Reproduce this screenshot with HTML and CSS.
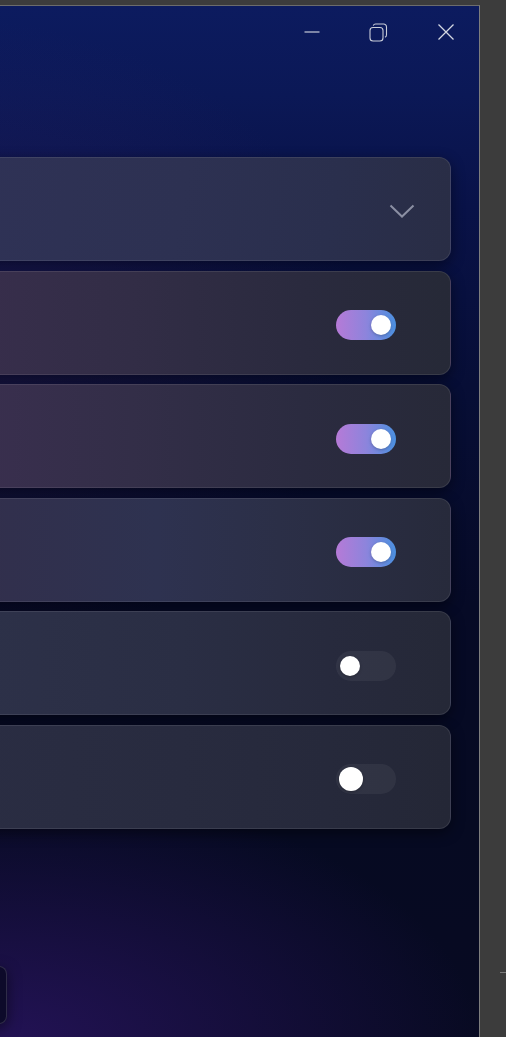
FILE: index.html
```html
<!DOCTYPE html>
<html lang="en">
<head>
<meta charset="utf-8">
<title>Settings</title>
<link rel="stylesheet" href="styles.css">
</head>
<body>
<div class="screen">
  <div class="window">
    <div class="titlebar">
      <button class="ctl" aria-label="Minimize">
        <svg width="16" height="2" viewBox="0 0 16 2"><line x1="0.5" y1="1" x2="15.5" y2="1" stroke="#c9cdd9" stroke-width="1.2"/></svg>
      </button>
      <button class="ctl" aria-label="Restore">
        <svg width="19" height="19" viewBox="0 0 19 19" fill="none" stroke="#c9cdd9" stroke-width="1.1">
          <rect x="1" y="4.5" width="13" height="13.5" rx="3"/>
          <path d="M4.2 2.6 A2.6 2.6 0 0 1 6.6 1 H14.6 A2.9 2.9 0 0 1 17.5 3.9 V11.6 A2.6 2.6 0 0 1 16 14.2"/>
        </svg>
      </button>
      <button class="ctl" aria-label="Close">
        <svg width="16" height="16" viewBox="0 0 16 16"><path d="M0.5 0.5 L15.5 15.5 M15.5 0.5 L0.5 15.5" stroke="#d4d8e3" stroke-width="1.3"/></svg>
      </button>
    </div>

    <div class="cards">
      <div class="card c1 card-select">
        <svg class="chevron" width="26" height="15" viewBox="0 0 26 15"><polyline points="1.5,1.5 13,12.5 24.5,1.5" fill="none" stroke="#8b8fa3" stroke-width="2"/></svg>
      </div>
      <div class="card c2"><span class="toggle on"><span class="knob"></span></span></div>
      <div class="card c3"><span class="toggle on"><span class="knob"></span></span></div>
      <div class="card c4"><span class="toggle on"><span class="knob"></span></span></div>
      <div class="card c5"><span class="toggle off"><span class="knob"></span></span></div>
      <div class="card c6"><span class="toggle off"><span class="knob big"></span></span></div>
    </div>

    <div class="footer">
      <button class="footer-btn" aria-label="Action"></button>
    </div>
  </div>
  <div class="side"><span class="tick"></span></div>
</div>
</body>
</html>
```

FILE: styles.css
```css
html, body {
  margin: 0;
  padding: 0;
}
body {
  background: #3c3c3c;
  font-family: "Segoe UI", "Noto Sans", "Liberation Sans", sans-serif;
  overflow: hidden;
  height: 1037px;
}
.screen {
  display: flex;
  padding-top: 5px;
  height: 1032px;
}
.window {
  flex: none;
  margin-left: -300px;
  width: 779px;
  height: 1040px;
  border-top: 1px solid #6c6c6c;
  border-right: 1px solid #7d7d7d;
  display: flex;
  flex-direction: column;
  background:
    radial-gradient(ellipse 480px 260px at 300px 100%, rgba(40, 20, 95, 0.85), rgba(40, 20, 95, 0) 100%),
    radial-gradient(ellipse 420px 320px at 240px 330px, rgba(70, 40, 110, 0.3), rgba(70, 40, 110, 0) 100%),
    linear-gradient(180deg, #0c1b5f 0px, #0b1856 90px, #091248 200px, #070e36 380px, #060a26 600px, #060a22 820px, #080a22 100%);
}
.titlebar {
  height: 52px;
  display: flex;
  justify-content: flex-end;
  flex: none;
}
.ctl {
  width: 67px;
  height: 52px;
  background: none;
  border: 0;
  padding: 0;
  display: flex;
  align-items: center;
  justify-content: center;
}
.cards {
  display: flex;
  flex-direction: column;
  gap: 9.6px;
  padding: 99px 28px 0 260px;
}
.card {
  height: 104px;
  box-sizing: border-box;
  border: 1px solid rgba(255, 255, 255, 0.09);
  border-radius: 12px;
  display: flex;
  align-items: center;
  justify-content: flex-end;
  padding: 5px 54px 0 0;
  box-shadow: 0 4px 14px rgba(0, 0, 0, 0.45);
}
.card-select {
  padding: 4px 35px 0 0;
}
.c1 { background: linear-gradient(100deg, #2f3256 0%, #2d3152 45%, #2a2f4d 75%, #292d45 100%); }
.c2 { background: linear-gradient(90deg, #382e4c 0%, #322d46 35%, #2a2a3e 70%, #262937 100%); }
.c3 { background: linear-gradient(90deg, #3a2f4f 0%, #332e48 35%, #2b2b40 70%, #272938 100%); }
.c4 { background: linear-gradient(90deg, #322f4c 0%, #2e3250 40%, #2b2f47 65%, #272a3b 100%); }
.c5 { background: linear-gradient(90deg, #2d3149 0%, #2a2e44 45%, #272a3d 75%, #252837 100%); }
.c6 { background: linear-gradient(90deg, #2a2d43 0%, #282b3f 45%, #26293b 75%, #242736 100%); }

.toggle {
  width: 60px;
  height: 30px;
  border-radius: 15px;
  box-sizing: border-box;
  display: flex;
  align-items: center;
}
.toggle.on {
  background: linear-gradient(90deg, #b67ad7 0%, #8d84dc 50%, #4b90e0 100%);
  justify-content: flex-end;
  padding-right: 5px;
}
.toggle.off {
  background: rgba(255, 255, 255, 0.055);
  justify-content: flex-start;
  padding-left: 4px;
}
.knob {
  width: 20px;
  height: 20px;
  border-radius: 50%;
  background: #ffffff;
  box-shadow: 0 1px 3px rgba(0, 0, 0, 0.25);
}
.knob.big {
  width: 24px;
  height: 24px;
  margin-left: -1px;
}
.footer {
  padding: 137px 0 0 107px;
}
.footer-btn {
  display: block;
  width: 200px;
  height: 58px;
  border: 1px solid rgba(255, 255, 255, 0.14);
  border-radius: 8px;
  background: #0d0a2a;
  box-shadow: 0 4px 14px rgba(0, 0, 0, 0.5);
}
.side {
  flex: 1;
  display: flex;
  flex-direction: column;
  align-items: flex-end;
}
.tick {
  display: block;
  margin-top: 967px;
  width: 6px;
  height: 1px;
  background: #7a7a7a;
}
```
